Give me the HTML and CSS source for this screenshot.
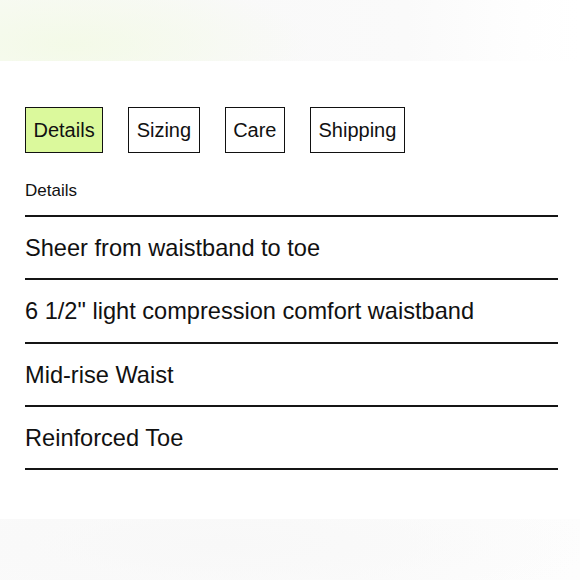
FILE: index.html
```html
<!DOCTYPE html>
<html lang="en">
<head>
<meta charset="utf-8">
<title>Product details</title>
<link rel="stylesheet" href="styles.css">
</head>
<body>
<div class="hero"></div>
<main class="panel">
  <nav class="tabs">
    <button class="tab active">Details</button>
    <button class="tab">Sizing</button>
    <button class="tab">Care</button>
    <button class="tab">Shipping</button>
  </nav>
  <h2 class="label">Details</h2>
  <ul class="list">
    <li>Sheer from waistband to toe</li>
    <li>6 1/2" light compression comfort waistband</li>
    <li>Mid-rise Waist</li>
    <li>Reinforced Toe</li>
  </ul>
</main>
<div class="footer-band"></div>
</body>
</html>
```

FILE: styles.css
```css
html, body {
  margin: 0;
  padding: 0;
  background: #ffffff;
}
body {
  width: 580px;
  height: 580px;
  overflow: hidden;
  font-family: "Liberation Sans", Arial, sans-serif;
  color: #111111;
  display: flex;
  flex-direction: column;
}
.hero {
  height: 61px;
  flex: none;
  background:
    radial-gradient(ellipse 240px 70px at 70px 45px, rgba(243, 250, 230, 0.9), rgba(243, 250, 230, 0) 100%),
    linear-gradient(90deg, #f8faf5 0%, #f9f9f9 40%, #fafafa 70%, #fefefe 90%, #ffffff 100%);
}
.panel {
  flex: 1;
  padding: 46px 22px 0 25px;
}
.tabs {
  display: flex;
  gap: 25px;
}
.tab {
  height: 46px;
  padding: 0 7.5px;
  border: 1.5px solid #111111;
  background: #ffffff;
  font-family: inherit;
  font-size: 20px;
  color: #111111;
  line-height: 22px;
  cursor: pointer;
}
.tab.active {
  background: #dbf99c;
}
.label {
  margin: 28px 0 0;
  font-size: 17px;
  font-weight: normal;
  line-height: 20px;
  padding-bottom: 14px;
}
.list {
  list-style: none;
  margin: 0;
  padding: 0;
  border-top: 2px solid #151515;
}
.list li {
  font-size: 23.6px;
  line-height: 29px;
  padding: 17px 0 15.25px;
  border-bottom: 2px solid #151515;
}
.footer-band {
  height: 61px;
  flex: none;
  background:
    radial-gradient(ellipse 380px 70px at 220px 25px, #f8f8f8, rgba(251, 251, 251, 0) 100%),
    linear-gradient(90deg, #fafafa 0%, #fbfbfb 60%, #fdfdfd 100%);
}
```
